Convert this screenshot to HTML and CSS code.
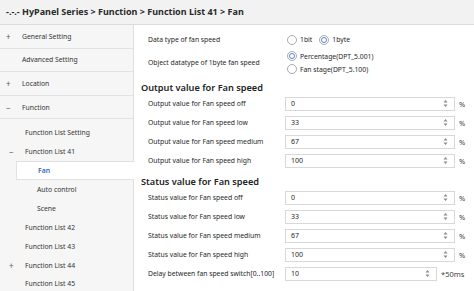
FILE: index.html
```html
<!DOCTYPE html>
<html>
<head>
<meta charset="utf-8">
<link rel="stylesheet" href="styles.css">
</head>
<body>
<div class="header">-.-.- HyPanel Series &gt; Function &gt; Function List 41 &gt; Fan</div>
<div class="main">
  <aside class="side">
    <div class="top"><span class="sign">+</span>General Setting</div>
    <div class="top"><span class="sign"></span>Advanced Setting</div>
    <div class="top"><span class="sign">+</span>Location</div>
    <div class="top"><span class="sign">−</span>Function</div>
    <div class="children">
      <div class="child"><span class="sign"></span>Function List Setting</div>
      <div class="child"><span class="sign">−</span>Function List 41</div>
      <div class="sub sel">Fan</div>
      <div class="sub">Auto control</div>
      <div class="sub">Scene</div>
      <div class="child"><span class="sign"></span>Function List 42</div>
      <div class="child"><span class="sign"></span>Function List 43</div>
      <div class="child"><span class="sign">+</span>Function List 44</div>
      <div class="child"><span class="sign"></span>Function List 45</div>
    </div>
  </aside>
  <section class="content">
    <div class="row r-type">
      <div class="label">Data type of fan speed</div>
      <div class="radios inline">
        <span class="radio"><span class="dot"></span>1bit</span>
        <span class="radio on"><span class="dot"></span>1byte</span>
      </div>
    </div>
    <div class="row r-obj">
      <div class="label">Object datatype of 1byte fan speed</div>
      <div class="radios stack">
        <span class="radio on"><span class="dot"></span>Percentage(DPT_5.001)</span>
        <span class="radio"><span class="dot"></span>Fan stage(DPT_5.100)</span>
      </div>
    </div>
    <div class="heading">Output value for Fan speed</div>
    <div class="row field"><div class="label">Output value for Fan speed off</div><div class="input"><span class="val">0</span><svg class="spin" viewBox="0 0 5 9"><path d="M0.5 3.5 L2.5 1 L4.5 3.5Z M0.5 5.5 L2.5 8 L4.5 5.5Z"/></svg></div><span class="unit">%</span></div>
    <div class="row field"><div class="label">Output value for Fan speed low</div><div class="input"><span class="val">33</span><svg class="spin" viewBox="0 0 5 9"><path d="M0.5 3.5 L2.5 1 L4.5 3.5Z M0.5 5.5 L2.5 8 L4.5 5.5Z"/></svg></div><span class="unit">%</span></div>
    <div class="row field"><div class="label">Output value for Fan speed medium</div><div class="input"><span class="val">67</span><svg class="spin" viewBox="0 0 5 9"><path d="M0.5 3.5 L2.5 1 L4.5 3.5Z M0.5 5.5 L2.5 8 L4.5 5.5Z"/></svg></div><span class="unit">%</span></div>
    <div class="row field"><div class="label">Output value for Fan speed high</div><div class="input"><span class="val">100</span><svg class="spin" viewBox="0 0 5 9"><path d="M0.5 3.5 L2.5 1 L4.5 3.5Z M0.5 5.5 L2.5 8 L4.5 5.5Z"/></svg></div><span class="unit">%</span></div>
    <div class="heading">Status value for Fan speed</div>
    <div class="row field"><div class="label">Status value for Fan speed off</div><div class="input"><span class="val">0</span><svg class="spin" viewBox="0 0 5 9"><path d="M0.5 3.5 L2.5 1 L4.5 3.5Z M0.5 5.5 L2.5 8 L4.5 5.5Z"/></svg></div><span class="unit">%</span></div>
    <div class="row field"><div class="label">Status value for Fan speed low</div><div class="input"><span class="val">33</span><svg class="spin" viewBox="0 0 5 9"><path d="M0.5 3.5 L2.5 1 L4.5 3.5Z M0.5 5.5 L2.5 8 L4.5 5.5Z"/></svg></div><span class="unit">%</span></div>
    <div class="row field"><div class="label">Status value for Fan speed medium</div><div class="input"><span class="val">67</span><svg class="spin" viewBox="0 0 5 9"><path d="M0.5 3.5 L2.5 1 L4.5 3.5Z M0.5 5.5 L2.5 8 L4.5 5.5Z"/></svg></div><span class="unit">%</span></div>
    <div class="row field"><div class="label">Status value for Fan speed high</div><div class="input"><span class="val">100</span><svg class="spin" viewBox="0 0 5 9"><path d="M0.5 3.5 L2.5 1 L4.5 3.5Z M0.5 5.5 L2.5 8 L4.5 5.5Z"/></svg></div><span class="unit">%</span></div>
    <div class="row field"><div class="label">Delay between fan speed switch[0..100]</div><div class="input short"><span class="val">10</span><svg class="spin" viewBox="0 0 5 9"><path d="M0.5 3.5 L2.5 1 L4.5 3.5Z M0.5 5.5 L2.5 8 L4.5 5.5Z"/></svg></div><span class="unit">*50ms</span></div>
  </section>
</div>
</body>
</html>
```
FILE: styles.css
```css
* { box-sizing: border-box; }
html, body { margin: 0; padding: 0; }
body {
  width: 474px;
  height: 291px;
  overflow: hidden;
  background: #ffffff;
  font-family: "Noto Sans", "Open Sans", sans-serif;
  font-size: 6.8px;
  color: #262626;
}
.header {
  height: 25px;
  line-height: 24px;
  padding-left: 6px;
  background: #f2f2f2;
  border-bottom: 1px solid #dcdcdc;
  font-weight: 700;
  font-size: 9px;
  color: #2a2a2a;
}
.main {
  display: flex;
  height: 266px;
}
.side {
  width: 134px;
  flex: none;
  background: #f6f6f6;
  border-right: 1px solid #dedede;
  color: #333;
}
.top {
  display: flex;
  align-items: center;
  height: 23.6px;
  padding-left: 6px;
  border-bottom: 1px solid #e2e2e2;
}
.sign {
  display: inline-block;
  width: 16px;
  color: #555;
  font-size: 8px;
}
.children {
  padding-top: 4px;
}
.child {
  display: flex;
  align-items: center;
  height: 18.9px;
  padding-left: 9px;
}
.sub {
  display: flex;
  align-items: center;
  height: 18.9px;
  margin-left: 16px;
  padding-left: 21px;
}
.sub.sel {
  background: #ffffff;
  margin-right: -1px;
  border: 1px solid #e2e2e2;
  border-right: none;
  color: #2f6db8;
  font-weight: 600;
}
.content {
  flex: 1;
  padding: 5px 0 0 14px;
}
.row {
  display: flex;
  align-items: center;
}
.label {
  width: 137px;
  flex: none;
  white-space: nowrap;
}
.r-type { height: 19px; }
.r-obj { height: 27px; }
.radios.inline { display: flex; gap: 5px; }
.radios.stack { display: flex; flex-direction: column; gap: 3px; }
.radio {
  display: inline-flex;
  align-items: center;
  margin-left: 2px;
}
.dot {
  width: 10px;
  height: 10px;
  border-radius: 50%;
  border: 1px solid #a5abb2;
  background: #fff;
  margin-right: 3px;
  display: inline-flex;
  align-items: center;
  justify-content: center;
}
.radio.on .dot::after {
  content: "";
  width: 4px;
  height: 4px;
  border-radius: 50%;
  border: 1.2px solid #5b86b8;
}
.heading {
  height: 18px;
  display: flex;
  align-items: center;
  padding-top: 5px;
  margin-left: -7px;
  font-size: 9.2px;
  font-weight: 600;
  color: #222;
}
.field { height: 19px; }
.input {
  width: 170px;
  height: 14px;
  border: 1px solid #d8d8d8;
  display: flex;
  align-items: center;
  justify-content: space-between;
  padding: 0 6px 0 5px;
  font-size: 7px;
}
.input.short { width: 152px; }
.spin {
  width: 5px;
  height: 9px;
  fill: #8c8c8c;
}
.unit {
  margin-left: 4px;
  font-size: 7.5px;
  color: #444;
}
```
